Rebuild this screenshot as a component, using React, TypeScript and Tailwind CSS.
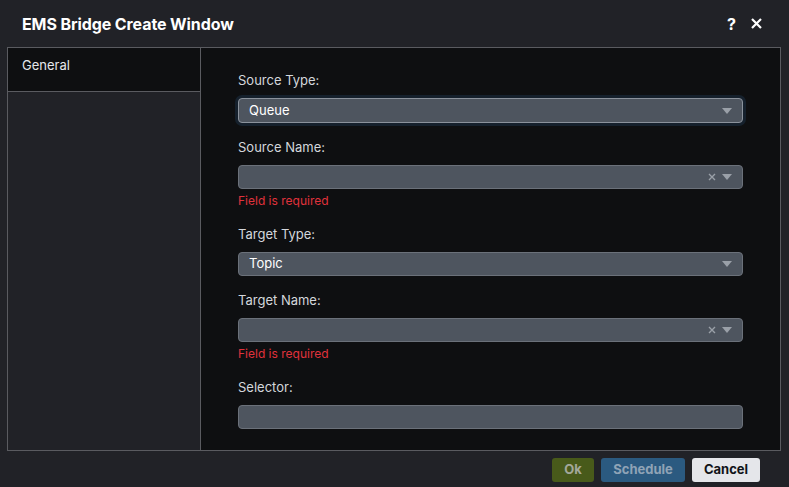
import React from "react";

const Caret = () => (
  <svg width="10" height="6" viewBox="0 0 10 6" className="fill-[#9aa0a8]">
    <path d="M0 0h10L5 6z" />
  </svg>
);

const ClearX = () => (
  <svg width="8" height="8" viewBox="0 0 8 8" className="stroke-[#9aa0a8]" strokeWidth="1.4">
    <path d="M1 1l6 6M7 1L1 7" />
  </svg>
);

interface FieldProps {
  label: string;
  value?: string;
  select?: boolean;
  clearable?: boolean;
  focused?: boolean;
  error?: string;
}

const Field: React.FC<FieldProps> = ({ label, value, select, clearable, focused, error }) => (
  <div className="flex flex-col">
    <label className="text-[13px] leading-4 text-[#d4d7dc] mb-[10px]">{label}</label>
    <div
      className={
        focused
          ? "h-[25px] rounded-[4px] border border-[#8b929c] bg-[#4e555f] shadow-[0_0_0_3px_#15202c] flex items-center px-[10px]"
          : "h-[24px] rounded-[4px] border border-[#6b717a] bg-[#4e555f] flex items-center px-[10px]"
      }
    >
      <span className="flex-1 text-[13px] text-white">{value}</span>
      {clearable && (
        <span className="mr-[6px] flex items-center">
          <ClearX />
        </span>
      )}
      {select && <Caret />}
    </div>
    {error && <span className="text-[12px] leading-4 text-[#e0323c] mt-[4px] mb-[1px]">{error}</span>}
  </div>
);

const App: React.FC = () => {
  return (
    <div
      className="w-[789px] h-[487px] bg-[#212227] text-white flex flex-col overflow-hidden"
      style={{ fontFamily: "Inter, 'Noto Sans', sans-serif" }}
    >
      {/* header */}
      <div className="h-[47px] flex items-center justify-between pl-[22px] pr-[27px]">
        <h1 className="text-[16px] font-bold tracking-[-0.1px]">EMS Bridge Create Window</h1>
        <div className="flex items-center gap-[15px] text-[16px] font-bold">
          <span>?</span>
          <svg width="11" height="11" viewBox="0 0 11 11" stroke="white" strokeWidth="2.2">
            <path d="M1 1l9 9M10 1L1 10" />
          </svg>
        </div>
      </div>

      {/* body */}
      <div className="mx-[7px] mr-[8px] h-[404px] border border-[#5a5b60] flex">
        <div className="w-[193px] border-r border-[#5a5b60] flex flex-col">
          <div className="h-[44px] bg-[#0e0f11] border-b border-[#5a5b60] pl-[14px] pt-[8px] text-[13px] text-[#e5e7eb]">
            General
          </div>
        </div>
        <div className="flex-1 bg-[#0e0f11] pl-[37px] pr-[37px] pt-[24px] flex flex-col gap-[16px]">
          <Field label="Source Type:" value="Queue" select focused />
          <Field label="Source Name:" select clearable error="Field is required" />
          <Field label="Target Type:" value="Topic" select />
          <Field label="Target Name:" select clearable error="Field is required" />
          <Field label="Selector:" />
        </div>
      </div>

      {/* footer */}
      <div className="flex justify-end gap-[7px] pr-[29px] pt-[7px]">
        <button className="h-[24px] w-[42px] rounded-[3px] bg-[#485a1a] text-[13px] font-bold text-[#a3a89a]">
          Ok
        </button>
        <button className="h-[24px] w-[84px] rounded-[3px] bg-[#2b5a80] text-[13px] font-bold text-[#8fa3b6]">
          Schedule
        </button>
        <button className="h-[24px] w-[68px] rounded-[3px] bg-[#e5e6ea] text-[13px] font-bold text-[#111318]">
          Cancel
        </button>
      </div>
    </div>
  );
};

export default App;
